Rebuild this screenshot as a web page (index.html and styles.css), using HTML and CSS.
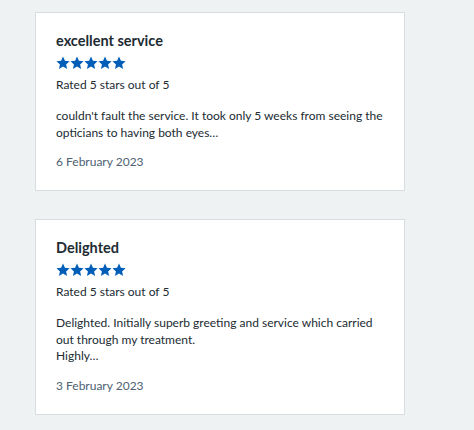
FILE: index.html
```html
<!DOCTYPE html>
<html lang="en">
<head>
<meta charset="utf-8">
<title>Reviews</title>
<link rel="stylesheet" href="styles.css">
</head>
<body>
<div class="page">
  <div class="list">
    <article class="card">
      <h3 class="title">excellent service</h3>
      <div class="stars" aria-hidden="true">
        <svg viewBox="0 0 24 24"><path d="M12 0.8l3.3 7.4 8 .8-6 5.4 1.8 7.9L12 18.2l-7 4.1 1.8-7.9-6-5.4 8-.8z"/></svg>
        <svg viewBox="0 0 24 24"><path d="M12 0.8l3.3 7.4 8 .8-6 5.4 1.8 7.9L12 18.2l-7 4.1 1.8-7.9-6-5.4 8-.8z"/></svg>
        <svg viewBox="0 0 24 24"><path d="M12 0.8l3.3 7.4 8 .8-6 5.4 1.8 7.9L12 18.2l-7 4.1 1.8-7.9-6-5.4 8-.8z"/></svg>
        <svg viewBox="0 0 24 24"><path d="M12 0.8l3.3 7.4 8 .8-6 5.4 1.8 7.9L12 18.2l-7 4.1 1.8-7.9-6-5.4 8-.8z"/></svg>
        <svg viewBox="0 0 24 24"><path d="M12 0.8l3.3 7.4 8 .8-6 5.4 1.8 7.9L12 18.2l-7 4.1 1.8-7.9-6-5.4 8-.8z"/></svg>
      </div>
      <p class="rated">Rated 5 stars out of 5</p>
      <p class="body">couldn't fault the service. It took only 5 weeks from seeing the opticians to having both eyes…</p>
      <p class="date">6 February 2023</p>
    </article>
    <article class="card">
      <h3 class="title">Delighted</h3>
      <div class="stars" aria-hidden="true">
        <svg viewBox="0 0 24 24"><path d="M12 0.8l3.3 7.4 8 .8-6 5.4 1.8 7.9L12 18.2l-7 4.1 1.8-7.9-6-5.4 8-.8z"/></svg>
        <svg viewBox="0 0 24 24"><path d="M12 0.8l3.3 7.4 8 .8-6 5.4 1.8 7.9L12 18.2l-7 4.1 1.8-7.9-6-5.4 8-.8z"/></svg>
        <svg viewBox="0 0 24 24"><path d="M12 0.8l3.3 7.4 8 .8-6 5.4 1.8 7.9L12 18.2l-7 4.1 1.8-7.9-6-5.4 8-.8z"/></svg>
        <svg viewBox="0 0 24 24"><path d="M12 0.8l3.3 7.4 8 .8-6 5.4 1.8 7.9L12 18.2l-7 4.1 1.8-7.9-6-5.4 8-.8z"/></svg>
        <svg viewBox="0 0 24 24"><path d="M12 0.8l3.3 7.4 8 .8-6 5.4 1.8 7.9L12 18.2l-7 4.1 1.8-7.9-6-5.4 8-.8z"/></svg>
      </div>
      <p class="rated">Rated 5 stars out of 5</p>
      <p class="body">Delighted. Initially superb greeting and service which carried out through my treatment.<br>Highly…</p>
      <p class="date">3 February 2023</p>
    </article>
  </div>
</div>
</body>
</html>
```
FILE: styles.css
```css
html, body {
  margin: 0;
  padding: 0;
  background: #eef2f2;
}
body {
  font-family: Lato, "Noto Sans", sans-serif;
  color: #212b32;
}
.page {
  padding: 12px 0 0 35px;
  min-height: 418px;
}
.list {
  display: flex;
  flex-direction: column;
  gap: 28px;
  width: 370px;
}
.card {
  background: #ffffff;
  border: 1px solid #d8dde0;
  padding: 18px 20px 20px;
}
.title {
  margin: 0;
  font-size: 14.5px;
  line-height: 20px;
  font-weight: 700;
}
.stars {
  display: flex;
  margin-top: 5px;
  height: 14px;
}
.stars svg {
  width: 14px;
  height: 14px;
  fill: #005eb8;
}
.rated {
  margin: 7px 0 0;
  font-size: 12px;
  line-height: 16px;
}
.body {
  margin: 15px 0 0;
  font-size: 12px;
  line-height: 16.5px;
}
.date {
  margin: 13px 0 0;
  font-size: 12px;
  line-height: 16px;
  color: #4c6272;
}
```
